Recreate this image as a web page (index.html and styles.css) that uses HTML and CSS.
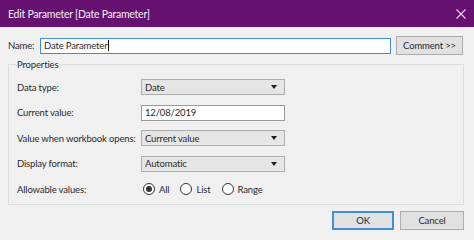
FILE: index.html
```html
<!DOCTYPE html>
<html lang="en">
<head>
    <meta charset="UTF-8">
    <title>Edit Parameter [Date Parameter]</title>
    <link rel="stylesheet" href="styles.css">
</head>
<body>
    <div class="dialog">
        <div class="titlebar">
            <span class="title">Edit Parameter [Date Parameter]</span>
            <svg class="close" width="10" height="10" viewBox="0 0 10 10">
                <path d="M0.5 0.5 L9.5 9.5 M9.5 0.5 L0.5 9.5" stroke="#e8d6ea" stroke-width="1.1" fill="none"/>
            </svg>
        </div>

        <div class="name-row">
            <label class="name-label">Name:</label>
            <div class="textbox name-input">Date Parameter<span class="caret"></span></div>
            <button class="btn comment">Comment &gt;&gt;</button>
        </div>

        <fieldset class="group">
            <legend>Properties</legend>
            <div class="rows">
                <span class="label">Data type:</span>
                <div class="select">Date<span class="arrow"></span></div>

                <span class="label">Current value:</span>
                <div class="textbox">12/08/2019</div>

                <span class="label">Value when workbook opens:</span>
                <div class="select">Current value<span class="arrow"></span></div>

                <span class="label">Display format:</span>
                <div class="select">Automatic<span class="arrow"></span></div>

                <span class="label">Allowable values:</span>
                <div class="radios">
                    <span class="radio checked"></span><span class="radio-text">All</span>
                    <span class="radio"></span><span class="radio-text">List</span>
                    <span class="radio"></span><span class="radio-text">Range</span>
                </div>
            </div>
        </fieldset>

        <div class="actions">
            <button class="btn ok">OK</button>
            <button class="btn">Cancel</button>
        </div>
    </div>
</body>
</html>
```

FILE: styles.css
```css
body {
    margin: 0;
    padding: 0;
    background: #f0f0f0;
    font-family: 'Lato', 'Noto Sans', sans-serif;
    font-size: 9.5px;
    letter-spacing: -0.15px;
    color: #2a2a2a;
}
.dialog {
    width: 474px;
    height: 240px;
    overflow: hidden;
    white-space: nowrap;
}
.titlebar {
    height: 27px;
    background: #661170;
    display: flex;
    align-items: center;
    justify-content: space-between;
    padding: 0 8px 0 8px;
    box-sizing: border-box;
}
.title {
    color: #f4eef5;
    font-size: 10.5px;
    letter-spacing: -0.25px;
}
.name-row {
    display: flex;
    align-items: center;
    margin: 9px 0 0 8px;
}
.name-label {
    width: 32px;
}
.textbox {
    box-sizing: border-box;
    height: 16px;
    background: #ffffff;
    border: 1px solid #9a9a9a;
    padding: 0 3px;
    display: flex;
    align-items: center;
}
.name-input {
    width: 351px;
    border-color: #3c8fd9;
}
.caret {
    display: inline-block;
    width: 1px;
    height: 11px;
    background: #000000;
}
.btn {
    box-sizing: border-box;
    font-family: inherit;
    font-size: 9.5px;
    letter-spacing: -0.15px;
    color: #2a2a2a;
    background: #e1e1e1;
    border: 1px solid #adadad;
    height: 19px;
    width: 64px;
    padding: 0;
}
.comment {
    width: 67px;
    margin-left: 5px;
}
.group {
    margin: 4px 10px 0 8px;
    padding: 0 8px 7px 8px;
    border: 1px solid #dcdcdc;
}
.group legend {
    padding: 0 1px;
    margin-left: -1px;
}
.rows {
    display: grid;
    grid-template-columns: 124px 144px;
    grid-auto-rows: 16px;
    row-gap: 9.5px;
    align-items: center;
    margin-top: 9px;
}
.select {
    box-sizing: border-box;
    height: 16px;
    background: #e5e5e5;
    border: 1px solid #adadad;
    padding: 0 3px;
    display: flex;
    align-items: center;
    justify-content: space-between;
}
.arrow {
    width: 0;
    height: 0;
    border-left: 3.5px solid transparent;
    border-right: 3.5px solid transparent;
    border-top: 4px solid #1e1e1e;
    margin-right: 4px;
}
.radios {
    display: flex;
    align-items: center;
    margin-left: 2px;
}
.radio {
    box-sizing: border-box;
    width: 12px;
    height: 12px;
    border: 1px solid #333333;
    border-radius: 50%;
    background: #ffffff;
    display: flex;
    align-items: center;
    justify-content: center;
}
.radio.checked::after {
    content: "";
    width: 6px;
    height: 6px;
    border-radius: 50%;
    background: #333333;
}
.radio-text {
    margin: 0 11px 0 4px;
}
.actions {
    display: flex;
    justify-content: flex-end;
    gap: 6px;
    margin: 6px 10px 0 0;
}
.ok {
    width: 62px;
    border: 2px solid #3c8fd9;
}
```
